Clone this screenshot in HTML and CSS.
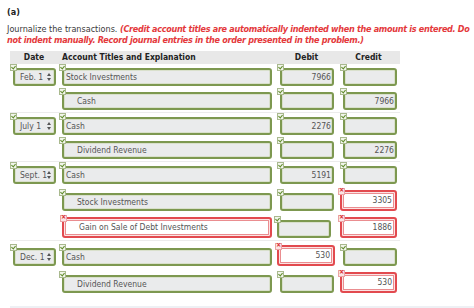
FILE: index.html
```html
<!DOCTYPE html>
<html lang="en">
  <head>
    <meta charset="UTF-8" />
    <meta name="viewport" content="width=device-width, initial-scale=1.0" />
    <title>Journal Entries</title>
    <link rel="stylesheet" href="styles.css">
  </head>
  <body>
    <div class="part">(a)</div>
    <p class="intro">
      Journalize the transactions.
      <em class="note">(Credit account titles are automatically indented when the amount is entered. Do</em><br>
      <em class="note">not indent manually. Record journal entries in the order presented in the problem.)</em>
    </p>

    <div class="journal">
      <div class="head">
        <span class="c-date">Date</span>
        <span class="c-acct">Account Titles and Explanation</span>
        <span class="c-num">Debit</span>
        <span class="c-num">Credit</span>
      </div>

      <!-- Feb. 1 -->
      <div class="entry">
        <div class="line">
          <div class="cell"><span class="field date">Feb. 1<i class="spin"></i><b class="mark"></b></span></div>
          <div class="cell"><span class="field acct">Stock Investments<b class="mark"></b></span></div>
          <div class="cell"><span class="field debit">7966<b class="mark"></b></span></div>
          <div class="cell"><span class="field credit"><b class="mark"></b></span></div>
        </div>
        <div class="line">
          <div class="cell"></div>
          <div class="cell"><span class="field acct indent">Cash<b class="mark"></b></span></div>
          <div class="cell"><span class="field debit"><b class="mark"></b></span></div>
          <div class="cell"><span class="field credit">7966<b class="mark"></b></span></div>
        </div>
      </div>

      <!-- July 1 -->
      <div class="entry">
        <div class="line">
          <div class="cell"><span class="field date">July 1<i class="spin"></i><b class="mark"></b></span></div>
          <div class="cell"><span class="field acct">Cash<b class="mark"></b></span></div>
          <div class="cell"><span class="field debit">2276<b class="mark"></b></span></div>
          <div class="cell"><span class="field credit"><b class="mark"></b></span></div>
        </div>
        <div class="line">
          <div class="cell"></div>
          <div class="cell"><span class="field acct indent">Dividend Revenue<b class="mark"></b></span></div>
          <div class="cell"><span class="field debit"><b class="mark"></b></span></div>
          <div class="cell"><span class="field credit">2276<b class="mark"></b></span></div>
        </div>
      </div>

      <!-- Sept. 1 -->
      <div class="entry">
        <div class="line">
          <div class="cell"><span class="field date">Sept. 1<i class="spin"></i><b class="mark"></b></span></div>
          <div class="cell"><span class="field acct">Cash<b class="mark"></b></span></div>
          <div class="cell"><span class="field debit">5191<b class="mark"></b></span></div>
          <div class="cell"><span class="field credit"><b class="mark"></b></span></div>
        </div>
        <div class="line">
          <div class="cell"></div>
          <div class="cell"><span class="field acct indent">Stock Investments<b class="mark"></b></span></div>
          <div class="cell"><span class="field debit"><b class="mark"></b></span></div>
          <div class="cell"><span class="field credit wrong">3305<b class="mark"></b></span></div>
        </div>
        <div class="line">
          <div class="cell"></div>
          <div class="cell"><span class="field acct indent wrong">Gain on Sale of Debt Investments<b class="mark"></b></span></div>
          <div class="cell"><span class="field debit nudge"><b class="mark"></b></span></div>
          <div class="cell"><span class="field credit wrong">1886<b class="mark"></b></span></div>
        </div>
      </div>

      <!-- Dec. 1 -->
      <div class="entry">
        <div class="line">
          <div class="cell"><span class="field date">Dec. 1<i class="spin"></i><b class="mark"></b></span></div>
          <div class="cell"><span class="field acct">Cash<b class="mark"></b></span></div>
          <div class="cell"><span class="field debit wrong">530<b class="mark"></b></span></div>
          <div class="cell"><span class="field credit"><b class="mark"></b></span></div>
        </div>
        <div class="line">
          <div class="cell"></div>
          <div class="cell"><span class="field acct indent">Dividend Revenue<b class="mark"></b></span></div>
          <div class="cell"><span class="field debit"><b class="mark"></b></span></div>
          <div class="cell"><span class="field credit wrong">530<b class="mark"></b></span></div>
        </div>
      </div>
    </div>

    <div class="foot"></div>
  </body>
</html>
```

FILE: styles.css
```css
body {
  font-family: "DejaVu Sans Condensed", "DejaVu Sans", Verdana, sans-serif;
  font-stretch: condensed;
  font-size: 9px;
  color: #333;
  background: #fff;
  margin: 0;
  padding: 0 0 0 7px;
}

.part {
  font-weight: bold;
  line-height: 10px;
  margin-top: 7px;
  color: #222;
}

.intro {
  margin: 7px 0 0;
  line-height: 11px;
  color: #3a3a3a;
  white-space: nowrap;
}

.note {
  color: #e4393c;
  font-weight: bold;
  letter-spacing: -0.3px;
}

/* ===== Journal table ===== */
.journal {
  margin: 5px 0 0 3px;
  width: 390px;
}

.head,
.line {
  display: grid;
  grid-template-columns: 48px 218px 61px 63px;
}

.head {
  background: #e8e8e8;
  height: 13px;
  line-height: 13px;
  font-weight: bold;
  font-size: 8.5px;
  color: #222;
}

.head .c-date {
  text-align: center;
}

.head .c-acct {
  padding-left: 4px;
}

.head .c-num {
  text-align: center;
}

.entry + .entry {
  border-top: 1px solid #ececec;
}

.line {
  padding: 4px 0 2px;
  align-items: end;
}

.cell {
  display: flex;
  align-items: flex-end;
}

.field {
  position: relative;
  display: block;
  box-sizing: border-box;
  height: 18px;
  line-height: 14px;
  border: 2px solid #7d9850;
  border-radius: 3px;
  background: #eaebec;
  box-shadow: inset 0 0 0 1px #d9e0cc;
  color: #555;
  font-size: 8.5px;
  white-space: nowrap;
}

.date {
  margin-left: 3px;
  width: 43px;
  padding-left: 5px;
}

.acct {
  margin-left: 4px;
  width: 210px;
  padding-left: 2px;
}

.acct.indent {
  padding-left: 13px;
}

.debit {
  margin-left: 4px;
  width: 54px;
  text-align: right;
  padding-right: 1px;
}

.debit.nudge {
  margin-left: 1px;
}

.credit {
  margin-left: 6px;
  width: 54px;
  text-align: right;
  padding-right: 1px;
}

/* wrong answer */
.field.wrong {
  height: 21px;
  line-height: 17px;
  background: #fff;
  border-color: #e24a4f;
  box-shadow: inset 0 0 0 1px #fbe3e3, inset 0 0 0 2px #ea8d90;
  padding-right: 3px;
}

.credit.wrong {
  margin-left: 3px;
  width: 57px;
}

.debit.wrong {
  margin-left: 1px;
  width: 58px;
}

.acct.wrong {
  padding-left: 15px;
}

/* select arrows */
.spin {
  position: absolute;
  right: 3px;
  top: 3px;
  width: 4px;
  height: 8px;
}

.spin::before,
.spin::after {
  content: "";
  position: absolute;
  left: 0;
  border-left: 2px solid transparent;
  border-right: 2px solid transparent;
}

.spin::before {
  top: 0;
  border-bottom: 3px solid #555;
}

.spin::after {
  bottom: 0;
  border-top: 3px solid #555;
}

/* check / cross badge */
.mark {
  position: absolute;
  left: -5px;
  top: -6px;
  width: 7px;
  height: 7px;
  box-sizing: border-box;
  border: 1px solid #a9b98e;
  background: #f1f5ea;
}

.mark::after {
  content: "";
  position: absolute;
  left: 1px;
  top: 0;
  width: 2px;
  height: 3px;
  border-right: 1px solid #5f8a2a;
  border-bottom: 1px solid #5f8a2a;
  transform: rotate(40deg);
}

.wrong > .mark {
  left: -4px;
  top: -4px;
  border-color: #eaa3a5;
  background: #fbe4e4;
}

.wrong > .mark::after {
  content: "\00d7";
  left: 0;
  top: -3px;
  width: 5px;
  height: auto;
  border: none;
  transform: none;
  color: #d8262c;
  font-size: 7px;
  font-weight: bold;
  line-height: 9px;
  text-align: center;
}

.foot {
  margin: 11px 0 0 3px;
  height: 8px;
  background: #eef0f4;
}
```
